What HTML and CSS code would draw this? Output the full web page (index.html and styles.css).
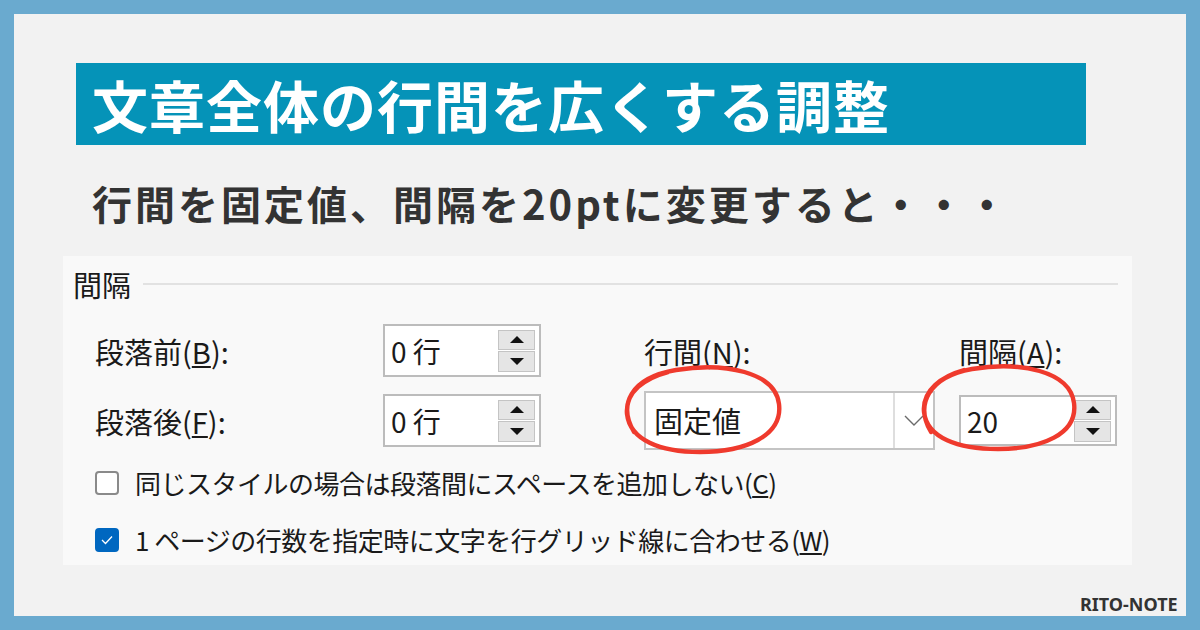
FILE: index.html
```html
<!DOCTYPE html>
<html lang="ja">
<head>
<meta charset="utf-8">
<link rel="stylesheet" href="styles.css">
</head>
<body>
<div class="frame">
  <div class="inner">
    <div class="banner"><h1 class="title">文章全体の行間を広くする調整</h1></div>
    <p class="subtitle">行間を固定値、間隔を20ptに変更すると・・・</p>
    <div class="panel">
      <div class="group-head"><span class="group-label">間隔</span><span class="group-line"></span></div>
      <div class="grid">
        <div class="lbl">段落前(<u>B</u>):</div>
        <div class="spin">
          <span class="spin-val">0 行</span>
          <span class="spin-btns"><span class="sbtn"><span class="tri-up"></span></span><span class="sbtn"><span class="tri-down"></span></span></span>
        </div>
        <div class="lbl">行間(<u>N</u>):</div>
        <div class="lbl">間隔(<u>A</u>):</div>

        <div class="lbl">段落後(<u>F</u>):</div>
        <div class="spin">
          <span class="spin-val">0 行</span>
          <span class="spin-btns"><span class="sbtn"><span class="tri-up"></span></span><span class="sbtn"><span class="tri-down"></span></span></span>
        </div>
        <div class="combo">
          <span class="combo-val">固定値</span>
          <span class="combo-btn"><svg width="20" height="12" viewBox="0 0 20 12"><path d="M1 1 L10 10 L19 1" fill="none" stroke="#6b6b6b" stroke-width="1.4"/></svg></span>
        </div>
        <div class="spin spin-narrow">
          <span class="spin-val">20</span>
          <span class="spin-btns"><span class="sbtn"><span class="tri-up"></span></span><span class="sbtn"><span class="tri-down"></span></span></span>
        </div>
      </div>
      <div class="check-row"><span class="cbox"></span><span class="ctext">同じスタイルの場合は段落間にスペースを追加しない(<u>C</u>)</span></div>
      <div class="check-row"><span class="cbox checked"><svg width="14" height="12" viewBox="0 0 14 12"><path d="M2 6 L5.5 9.5 L12 2.5" fill="none" stroke="#ffffff" stroke-width="1.3"/></svg></span><span class="ctext">1 ページの行数を指定時に文字を行グリッド線に合わせる(<u>W</u>)</span></div>
    </div>
    <div class="credit">RITO-NOTE</div>
  </div>
  <svg class="marks" width="1200" height="630" viewBox="0 0 1200 630">
    <g fill="none" stroke="#ef3a2d" stroke-width="4.4" stroke-linecap="round">
      <path d="M634 432 C 618 405, 630 378, 676 370 C 725 362, 775 372, 779 404 C 783 436, 745 452, 700 452 C 660 452, 630 440, 627 414 C 625 392, 645 378, 668 372"/>
      <path d="M931 432 C 915 405, 928 377, 972 369 C 1020 361, 1070 371, 1074 403 C 1078 434, 1042 449, 998 449 C 958 449, 927 438, 924 412 C 922 390, 942 376, 964 370"/>
    </g>
  </svg>
</div>
</body>
</html>
```
FILE: styles.css
```css
* { box-sizing: border-box; }
html, body { margin: 0; padding: 0; }
body {
  width: 1200px;
  height: 630px;
  overflow: hidden;
  font-family: "Noto Sans CJK JP", "Noto Sans", sans-serif;
}
.frame {
  position: relative;
  width: 1200px;
  height: 630px;
  background: #6aaacf;
  padding: 14px;
}
.inner {
  width: 1172px;
  height: 602px;
  background: #f2f2f2;
  display: flex;
  flex-direction: column;
  align-items: flex-start;
}
.banner {
  margin: 49px 0 0 62px;
  width: 1010px;
  height: 82px;
  background: #0593b8;
  display: flex;
  align-items: center;
  padding-left: 16px;
}
.title {
  margin: 0;
  color: #ffffff;
  font-size: 56px;
  font-weight: 700;
  line-height: 1;
  letter-spacing: 1px;
}
.subtitle {
  margin: 32px 0 0 78px;
  color: #333333;
  font-size: 40px;
  font-weight: 700;
  line-height: 52px;
  letter-spacing: 3px;
}
.panel {
  margin: 27px 0 0 49px;
  width: 1069px;
  height: 309px;
  background: #f9f9f9;
  padding: 8px 14px 0 32px;
  color: #1a1a1a;
  font-size: 29px;
}
.group-head {
  display: flex;
  align-items: center;
  margin-left: -22px;
  height: 40px;
}
.group-label { line-height: 40px; }
.group-line {
  flex: 1;
  height: 2px;
  background: #e2e2e2;
  margin-left: 12px;
}
.grid {
  margin-top: 20px;
  display: grid;
  grid-template-columns: 288px 261px 315px 1fr;
  grid-template-rows: 53px 59px;
  row-gap: 14px;
  align-items: center;
}
.lbl { line-height: 40px; }
.spin {
  width: 158px;
  height: 53px;
  border: 2px solid #bcbcbc;
  background: #ffffff;
  display: flex;
  align-items: center;
  justify-content: space-between;
  padding: 0 4px 0 6px;
}
.spin-narrow { height: 51px; }
.spin-val { font-size: 28px; line-height: 1; }
.spin-btns {
  display: flex;
  flex-direction: column;
  width: 37px;
  height: 42px;
  gap: 1px;
}
.sbtn {
  flex: 1;
  background: #e5e5e5;
  border: 1px solid #c4c4c4;
  display: flex;
  align-items: center;
  justify-content: center;
}
.tri-up {
  width: 0; height: 0;
  border-left: 7px solid transparent;
  border-right: 7px solid transparent;
  border-bottom: 7px solid #111111;
}
.tri-down {
  width: 0; height: 0;
  border-left: 7px solid transparent;
  border-right: 7px solid transparent;
  border-top: 7px solid #111111;
}
.combo {
  width: 291px;
  height: 59px;
  border: 2px solid #c4c4c4;
  background: #ffffff;
  display: flex;
  align-items: center;
  justify-content: space-between;
}
.combo-val { padding-left: 8px; font-size: 29px; line-height: 1; }
.combo-btn {
  width: 40px;
  height: 100%;
  border-left: 2px solid #dedede;
  display: flex;
  align-items: center;
  justify-content: center;
}
.check-row {
  display: flex;
  align-items: center;
  height: 40px;
  margin-top: 13px;
}
.check-row + .check-row { margin-top: 17px; }
.cbox {
  width: 24px;
  height: 24px;
  border: 2px solid #8a8a8a;
  border-radius: 4px;
  background: #ffffff;
  margin-right: 16px;
  display: flex;
  align-items: center;
  justify-content: center;
}
.cbox.checked {
  background: #0067c0;
  border-color: #0067c0;
}
.ctext {
  font-size: 26px;
  line-height: 1;
  letter-spacing: -0.5px;
}
.credit {
  margin: 29px 0 0 1066px;
  font-family: "Noto Sans", sans-serif;
  font-weight: 700;
  font-size: 18px;
  color: #333333;
  line-height: 20px;
}
.marks {
  position: absolute;
  left: 0;
  top: 0;
  pointer-events: none;
}
```
